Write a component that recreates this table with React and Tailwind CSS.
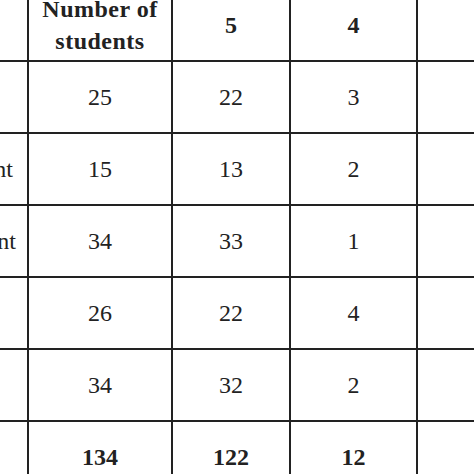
import React from 'react';

// rows of the table: label (first column, mostly cut off), total, grade 5, grade 4
const rows = [
  { label: '', pad: 'pr-[14px]', n: 25, five: 22, four: 3 },
  { label: 'Sufficient', pad: 'pr-[14px]', n: 15, five: 13, four: 2 },
  { label: 'Excellent', pad: 'pr-[11px]', n: 34, five: 33, four: 1 },
  { label: '', pad: 'pr-[14px]', n: 26, five: 22, four: 4 },
  { label: '', pad: 'pr-[14px]', n: 34, five: 32, four: 2 },
];

function Cell({ children, className = '' }) {
  return (
    <div className={`bg-white flex items-center justify-center text-center h-[70px] ${className}`}>
      {children}
    </div>
  );
}

function App() {
  return (
    <div className="w-[474px] h-[474px] overflow-hidden bg-white text-[#222] text-[24px] font-['Liberation_Serif','Times_New_Roman',serif]">
      <div className="grid grid-cols-[200px_142px_116px_125px_100px] gap-[2px] bg-[#222] ml-[-173px] mt-[-10px] w-max">
        {/* header */}
        <Cell />
        <Cell className="font-bold leading-[32px] tracking-[0.5px]">
          Number of
          <br />
          students
        </Cell>
        <Cell className="font-bold">5</Cell>
        <Cell className="font-bold">4</Cell>
        <Cell />

        {rows.map((r, i) => (
          <React.Fragment key={i}>
            <Cell className={`justify-end ${r.pad} whitespace-nowrap`}>{r.label}</Cell>
            <Cell>{r.n}</Cell>
            <Cell>{r.five}</Cell>
            <Cell>{r.four}</Cell>
            <Cell />
          </React.Fragment>
        ))}

        {/* totals */}
        <Cell />
        <Cell className="font-bold">134</Cell>
        <Cell className="font-bold">122</Cell>
        <Cell className="font-bold">12</Cell>
        <Cell />
      </div>
    </div>
  );
}

export default App;
